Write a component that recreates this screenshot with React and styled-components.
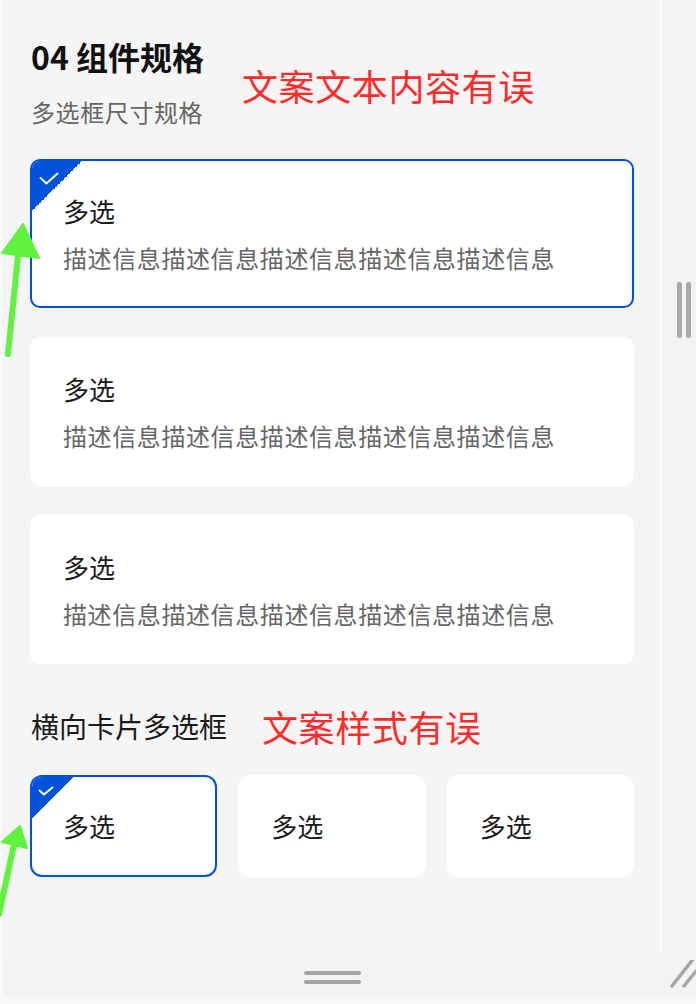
import React from "react";
import styled, { createGlobalStyle } from "styled-components";

const Global = createGlobalStyle`
  html, body { margin: 0; padding: 0; background: #f8f9f9; }
  body { font-family: "Noto Sans CJK SC", "Noto Sans", sans-serif; }
  * { box-sizing: border-box; }
`;

const Frame = styled.div`
  position: relative;
  width: 696px;
  height: 1004px;
  display: flex;
  flex-direction: column;
  overflow: hidden;
  background: #f8f9f9;
`;

const MainRow = styled.div`
  height: 954px;
  display: flex;
`;

const Content = styled.main`
  position: relative;
  width: 660px;
  margin-left: 2px;
  background: #f5f5f5;
  border-right: 1px solid #ffffff;
  padding: 36px 27px 0 28px;
  display: flex;
  flex-direction: column;
`;

const Title = styled.h1`
  margin: 0 0 0 1px;
  font-size: 32px;
  line-height: 40px;
  font-weight: 700;
  color: #111;
`;

const Subtitle = styled.p`
  margin: 19px 0 0 1px;
  font-size: 24px;
  line-height: 34px;
  letter-spacing: 0.6px;
  color: #666;
`;

const Note = styled.span`
  font-size: 36px;
  line-height: 44px;
  letter-spacing: 0.6px;
  color: #ff2b2b;
  white-space: nowrap;
`;

const FloatingNote = styled(Note)`
  position: absolute;
  left: 240px;
  top: 63px;
`;

const CardList = styled.div`
  margin-top: 30px;
  display: flex;
  flex-direction: column;
  gap: 29px;
`;

const Card = styled.div`
  position: relative;
  overflow: hidden;
  height: 149px;
  background: #fff;
  border: 2px solid ${(p) => (p.$checked ? "#0052d9" : "#fff")};
  border-radius: 10px;
  padding: 32px 30px 0 31px;
`;

const Corner = styled.span`
  position: absolute;
  left: 0;
  top: 0;
  width: ${(p) => p.$size}px;
  height: ${(p) => p.$size}px;
  background: linear-gradient(135deg, #0052d9 50%, transparent 50%);
  svg {
    position: absolute;
    left: ${(p) => p.$cx}px;
    top: ${(p) => p.$cy}px;
  }
`;

const CardTitle = styled.div`
  font-size: 26px;
  line-height: 36px;
  color: #1a1a1a;
`;

const CardDesc = styled.div`
  margin-top: 11px;
  font-size: 24px;
  line-height: 36px;
  letter-spacing: 0.6px;
  color: #666;
  white-space: nowrap;
`;

const SectionRow = styled.div`
  margin-top: 43px;
  height: 38px;
  display: flex;
  align-items: center;
  gap: 35px;
  padding-left: 1px;
`;

const SectionLabel = styled.h2`
  margin: 0;
  font-size: 28px;
  line-height: 38px;
  font-weight: 400;
  color: #1a1a1a;
`;

const HGrid = styled.div`
  margin-top: 30px;
  display: grid;
  grid-template-columns: repeat(3, 1fr);
  gap: 21px;
`;

const HCard = styled.div`
  position: relative;
  overflow: hidden;
  height: 102px;
  background: #fff;
  border: 2px solid ${(p) => (p.$checked ? "#0052d9" : "#fff")};
  border-radius: 12px;
  padding: 0 30px 0 31px;
  display: flex;
  align-items: center;
  font-size: 26px;
  line-height: 36px;
  color: #1a1a1a;
`;

const Track = styled.aside`
  flex: 1;
  background: #f2f3f5;
  display: flex;
  gap: 4px;
  padding: 282px 0 0 15px;
`;

const Grip = styled.span`
  width: 5px;
  height: 56px;
  border-radius: 3px;
  background: #a8a8a8;
`;

const BottomBar = styled.footer`
  position: relative;
  height: 43px;
  margin-left: 3px;
  background: #f2f3f5;
  display: flex;
`;

const HandleArea = styled.div`
  width: 659px;
  display: flex;
  flex-direction: column;
  align-items: center;
  padding-top: 17px;
  gap: 5px;
`;

const HandleLine = styled.span`
  width: 57px;
  height: 4px;
  border-radius: 2px;
  background: #a6a6a6;
`;

const Resize = styled.svg`
  position: absolute;
  right: 0;
  bottom: 9px;
`;

const Arrows = styled.svg`
  position: absolute;
  left: 0;
  top: 0;
  pointer-events: none;
`;

const Check = ({ w, h }) => (
  <svg width={w} height={h} viewBox={`0 0 ${w} ${h}`} fill="none">
    <path
      d={`M1.5 ${h * 0.45} L${w * 0.37} ${h - 1.5} L${w - 1.5} 1.5`}
      stroke="#fff"
      strokeWidth="2"
      strokeLinecap="round"
      strokeLinejoin="round"
    />
  </svg>
);

const desc = "描述信息描述信息描述信息描述信息描述信息";

export default function App() {
  const cards = [true, false, false];
  const hcards = [true, false, false];
  return (
    <>
      <Global />
      <Frame>
        <MainRow>
          <Content>
            <Title>04 组件规格</Title>
            <Subtitle>多选框尺寸规格</Subtitle>
            <FloatingNote>文案文本内容有误</FloatingNote>
            <CardList>
              {cards.map((c, i) => (
                <Card key={i} $checked={c}>
                  {c && (
                    <Corner $size={50} $cx={7} $cy={11}>
                      <Check w={20} h={13} />
                    </Corner>
                  )}
                  <CardTitle>多选</CardTitle>
                  <CardDesc>{desc}</CardDesc>
                </Card>
              ))}
            </CardList>
            <SectionRow>
              <SectionLabel>横向卡片多选框</SectionLabel>
              <Note>文案样式有误</Note>
            </SectionRow>
            <HGrid>
              {hcards.map((c, i) => (
                <HCard key={i} $checked={c}>
                  {c && (
                    <Corner $size={42} $cx={6} $cy={9}>
                      <Check w={16} h={10} />
                    </Corner>
                  )}
                  多选
                </HCard>
              ))}
            </HGrid>
          </Content>
          <Track>
            <Grip />
            <Grip />
          </Track>
        </MainRow>
        <BottomBar>
          <HandleArea>
            <HandleLine />
            <HandleLine />
          </HandleArea>
          <Resize width="26" height="28" viewBox="0 0 26 28">
            <path d="M2 26 L24 -2" stroke="#a6a6a6" strokeWidth="3.5" strokeLinecap="round" />
            <path d="M14 26 L26 11" stroke="#a6a6a6" strokeWidth="3.5" strokeLinecap="round" />
          </Resize>
        </BottomBar>
        <Arrows width="60" height="1004" viewBox="0 0 60 1004">
          <g fill="#60f23e" stroke="#60f23e" strokeLinecap="round" strokeLinejoin="round">
            <path d="M8 354 L19 246" strokeWidth="6" fill="none" />
            <path d="M23 224 L2 253 L39 258 Z" strokeWidth="2" />
            <path d="M-1 914 L15 840" strokeWidth="6" fill="none" />
            <path d="M20 826 L2 842 L27 848 Z" strokeWidth="2" />
          </g>
        </Arrows>
      </Frame>
    </>
  );
}
